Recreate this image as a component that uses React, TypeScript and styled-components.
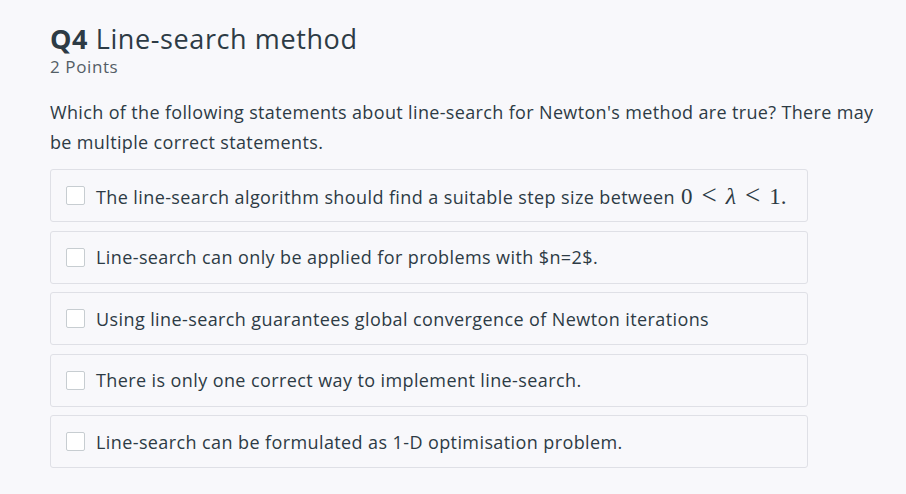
import styled, { createGlobalStyle } from 'styled-components'

const Global = createGlobalStyle`
  body {
    margin: 0;
    background: #f8f8fb;
    font-family: "Open Sans", sans-serif;
    color: #2d3b45;
  }
`

const answers: { text: string; math?: boolean }[] = [
  { text: 'The line-search algorithm should find a suitable step size between', math: true },
  { text: 'Line-search can only be applied for problems with $n=2$.' },
  { text: 'Using line-search guarantees global convergence of Newton iterations' },
  { text: 'There is only one correct way to implement line-search.' },
  { text: 'Line-search can be formulated as 1-D optimisation problem.' },
]

function App() {
  return (
    <Page>
      <Global />
      <Header>
        <Title>
          <b>Q4</b> Line-search method
        </Title>
        <Points>2 Points</Points>
      </Header>
      <Prompt>
        Which of the following statements about line-search for Newton's method are true? There may
        be multiple correct statements.
      </Prompt>
      <List>
        {answers.map((a) => (
          <Option key={a.text}>
            <Box type="checkbox" />
            <Label>
              {a.text}
              {a.math && (
                <Math>
                  0<Op>&lt;</Op>
                  <i>λ</i>
                  <Op>&lt;</Op>1.
                </Math>
              )}
            </Label>
          </Option>
        ))}
      </List>
    </Page>
  )
}

export default App

const Page = styled.div`
  padding: 22px 50px 20px 50px;
`

const Header = styled.div`
  margin-bottom: 19px;
`

const Title = styled.h2`
  margin: 0;
  font-size: 27px;
  font-weight: 400;
  line-height: 34px;
  letter-spacing: 0.6px;
  b {
    font-weight: 700;
  }
`

const Points = styled.div`
  font-size: 17px;
  color: #545e66;
  line-height: 22px;
  letter-spacing: 0.6px;
`

const Prompt = styled.p`
  margin: 0 0 12px 0;
  font-size: 18px;
  line-height: 30px;
  letter-spacing: 0.35px;
  width: 845px;
`

const List = styled.div`
  display: flex;
  flex-direction: column;
  gap: 8.5px;
  width: 758px;
`

const Option = styled.label`
  display: flex;
  align-items: center;
  gap: 11px;
  height: 53px;
  padding: 0 15px;
  box-sizing: border-box;
  border: 1px solid #dfe0e6;
  border-radius: 3px;
  background: #f8f8fb;
`

const Box = styled.input`
  appearance: none;
  margin: 0;
  width: 19px;
  height: 19px;
  border: 1px solid #c7cdd1;
  border-radius: 2px;
  background: #fff;
  flex: none;
`

const Label = styled.span`
  font-size: 18px;
  letter-spacing: 0.4px;
`

const Math = styled.span`
  font-family: "Liberation Serif", "DejaVu Serif", serif;
  font-size: 23px;
  letter-spacing: 0;
  margin-left: 6px;
  i {
    font-style: italic;
    font-size: 24px;
  }
`

const Op = styled.span`
  font-size: 27px;
  margin: 0 9px;
`
